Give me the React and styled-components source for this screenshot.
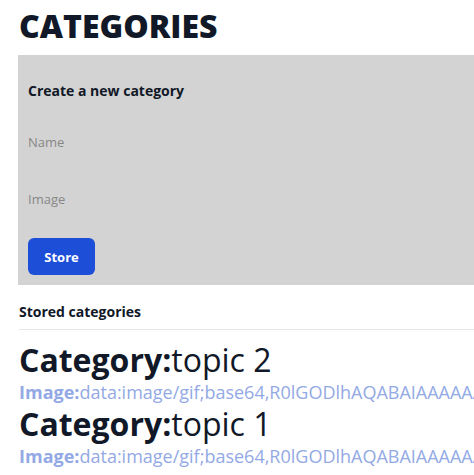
import React from 'react';
import styled, { createGlobalStyle } from 'styled-components';

const GlobalStyle = createGlobalStyle`
  body {
    margin: 0;
    font-family: "Open Sans", "Noto Sans", sans-serif;
    color: #111827;
    background: #ffffff;
    overflow: hidden;
  }
`;

const PLACEHOLDER =
  'data:image/gif;base64,R0lGODlhAQABAIAAAAAAAP///yH5BAEAAAAALAAAAAABAAEAAAIBRAA7';

const categories = [
  { name: 'topic 2', image: PLACEHOLDER },
  { name: 'topic 1', image: PLACEHOLDER },
];

const App = () => {
  return (
    <>
      <GlobalStyle />
      <Page>
        <Title>CATEGORIES</Title>
        <FormPanel>
          <FormHeading>Create a new category</FormHeading>
          <Field placeholder="Name" />
          <Field placeholder="Image" />
          <StoreButton type="button">Store</StoreButton>
        </FormPanel>
        <SectionHeading>Stored categories</SectionHeading>
        <List>
          {categories.map((category) => (
            <Item key={category.name}>
              <CategoryName>
                <strong>Category:</strong>
                {category.name}
              </CategoryName>
              <ImageLine>
                <strong>Image:</strong>
                {category.image}
              </ImageLine>
            </Item>
          ))}
        </List>
      </Page>
    </>
  );
};

const Page = styled.main`
  padding: 8px 0 0 19px;
  width: 700px;
`;

const Title = styled.h1`
  margin: 0 0 11px;
  font-size: 32px;
  font-weight: 800;
  line-height: 36px;
  color: #111827;
`;

const FormPanel = styled.section`
  background: #d3d3d3;
  margin-left: -1px;
  padding: 24px 10px 10px;
  display: flex;
  flex-direction: column;
  align-items: flex-start;
  height: 230px;
  box-sizing: border-box;
`;

const FormHeading = styled.h3`
  margin: 0 0 29px;
  font-size: 14px;
  font-weight: 700;
  line-height: 24px;
`;

const Field = styled.input`
  border: none;
  background: transparent;
  padding: 0;
  margin: 0 0 37px;
  font-family: inherit;
  font-size: 13px;
  line-height: 20px;
  color: #111827;
  outline: none;

  &::placeholder {
    color: #878787;
  }

  & + & {
    margin-bottom: 29px;
  }
`;

const StoreButton = styled.button`
  width: 67px;
  height: 37px;
  border: none;
  border-radius: 6px;
  background: #1d4ed8;
  color: #ffffff;
  font-family: inherit;
  font-size: 13px;
  font-weight: 700;
`;

const SectionHeading = styled.h4`
  margin: 17px 0 0;
  padding-bottom: 7px;
  font-size: 14px;
  font-weight: 700;
  line-height: 20px;
  border-bottom: 1px solid #e5e7eb;
`;

const List = styled.ul`
  list-style: none;
  margin: 0;
  padding: 10px 0 0;
  width: 455px;
  overflow: hidden;
`;

const Item = styled.li`
  display: flex;
  flex-direction: column;
`;

const CategoryName = styled.p`
  margin: 0;
  font-size: 32px;
  line-height: 40px;
  font-weight: 400;

  strong {
    font-weight: 700;
  }
`;

const ImageLine = styled.p`
  margin: 0;
  font-size: 18px;
  line-height: 24px;
  color: #93a9e4;
  white-space: nowrap;

  strong {
    font-weight: 700;
  }
`;

export default App;
